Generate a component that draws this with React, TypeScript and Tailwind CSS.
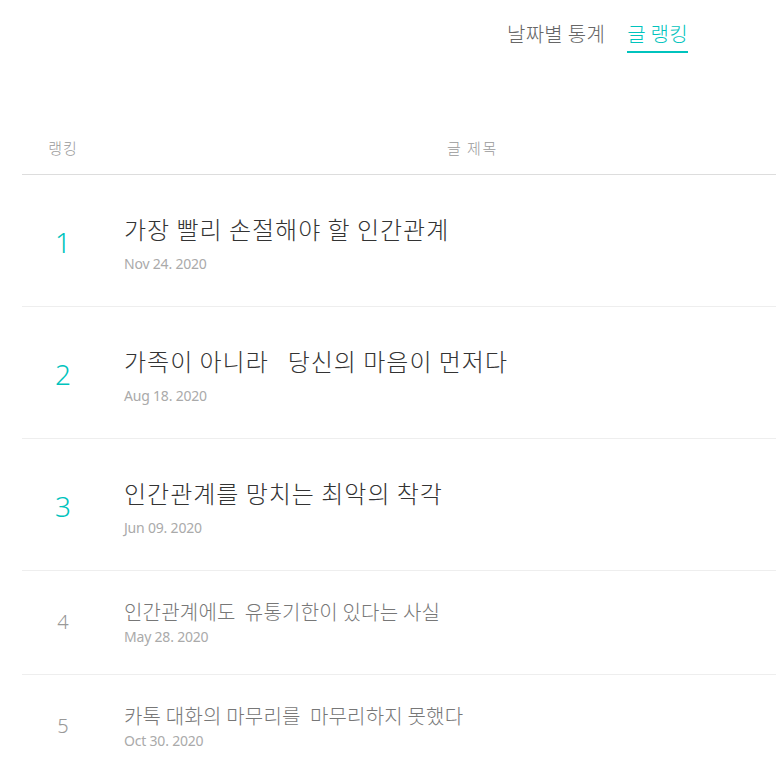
import React from "react";

const rows = [
  { rank: 1, title: "가장 빨리 손절해야 할 인간관계", date: "Nov 24. 2020", top: true },
  { rank: 2, title: "가족이 아니라   당신의 마음이 먼저다", date: "Aug 18. 2020", top: true },
  { rank: 3, title: "인간관계를 망치는 최악의 착각", date: "Jun 09. 2020", top: true },
  { rank: 4, title: "인간관계에도  유통기한이 있다는 사실", date: "May 28. 2020", top: false },
  { rank: 5, title: "카톡 대화의 마무리를  마무리하지 못했다", date: "Oct 30. 2020", top: false },
];

const kr = { fontFamily: '"Noto Sans CJK KR", "Noto Sans", sans-serif' };

export default function App() {
  return (
    <div className="w-[776px] h-[777px] bg-white overflow-hidden font-light" style={kr}>
      <div className="flex justify-end pr-[88px] pt-[19px] gap-[22px] h-[60px]">
        <div className="text-[20px] leading-[30px] text-[#666] tracking-[0.3px]">날짜별 통계</div>
        <div className="flex flex-col">
          <div className="text-[20px] leading-[30px] text-[#00c3bd] tracking-[0.3px]">글 랭킹</div>
          <div className="h-[2px] bg-[#00c3bd] mt-[2px]"></div>
        </div>
      </div>
      <div className="ml-[22px] mt-[60px]">
        <div className="flex items-center h-[55px] pt-[2px] border-b border-[#ddd] text-[15px] text-[#999] tracking-[1px]">
          <div className="w-[82px] text-center">랭킹</div>
          <div className="ml-[343px] tracking-[1.5px]">글 제목</div>
        </div>
        {rows.map((r) => (
          <div
            key={r.rank}
            className={
              "flex items-center border-b border-[#eee] " + (r.top ? "h-[132px]" : "h-[104px]")
            }
          >
            <div
              className={
                "w-[82px] text-center font-light " +
                (r.top ? "text-[28px] text-[#00c3bd] mt-[2px]" : "text-[20px] text-[#999] mt-[-1px]")
              }
              style={{ fontFamily: '"Noto Sans", sans-serif' }}
            >
              {r.rank}
            </div>
            <div className={"ml-[20px] flex flex-col " + (r.top ? "mt-[6px]" : "mt-[1px]")}>
              <div
                className={
                  r.top
                    ? "text-[24px] leading-[32px] text-[#333] whitespace-pre tracking-[1px]"
                    : "text-[20px] leading-[26px] text-[#777] whitespace-pre tracking-[0.2px]"
                }
              >
                {r.title}
              </div>
              <div
                className={
                  "text-[14px] text-[#aaa] tracking-[-0.2px] font-normal " + (r.top ? "mt-[8px]" : "mt-[1px]")
                }
                style={{ fontFamily: '"Noto Sans", sans-serif' }}
              >
                {r.date}
              </div>
            </div>
          </div>
        ))}
      </div>
    </div>
  );
}
